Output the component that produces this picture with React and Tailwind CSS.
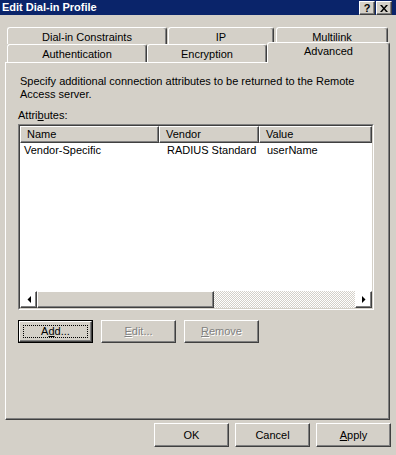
import React from 'react';

const raised = 'border border-t-white border-l-white border-r-[#404040] border-b-[#404040] shadow-[inset_-1px_-1px_#808080]';
const tabEdge = 'border-t border-l border-r border-t-white border-l-white border-r-[#404040] rounded-t-[3px] shadow-[inset_-1px_0_#808080]';

function Tab({ width, children, selected }) {
  if (selected) {
    return (
      <div
        className={`${tabEdge} relative z-10 mt-[-2px] h-[21px] bg-[#d4d0c8] flex justify-center pt-[2px] leading-[13px]`}
        style={{ width }}
      >
        {children}
      </div>
    );
  }
  return (
    <div className={`${tabEdge} h-full flex justify-center pt-[3px] leading-[13px]`} style={{ width }}>
      {children}
    </div>
  );
}

function Button({ children, disabled, isDefault, w = 75, h = 23 }) {
  if (isDefault) {
    return (
      <div className="border border-black" style={{ width: w, height: h }}>
        <div className={`${raised} relative h-full flex items-center justify-center`}>
          <span className="absolute inset-[3px] border border-dotted border-black" />
          <span className="leading-[13px]">{children}</span>
        </div>
      </div>
    );
  }
  return (
    <div className={`${raised} flex items-center justify-center`} style={{ width: w, height: h }}>
      <span className={disabled ? 'leading-[13px] text-[#808080] [text-shadow:1px_1px_#fff]' : 'leading-[13px]'}>{children}</span>
    </div>
  );
}

function Arrow({ dir }) {
  return (
    <div className={`${raised} w-[17px] h-[17px] flex items-center justify-center`}>
      <svg width="4" height="7" viewBox="0 0 4 7">
        {dir === 'left' ? <polygon points="4,0 4,7 0.5,3.5" fill="#000" /> : <polygon points="0,0 0,7 3.5,3.5" fill="#000" />}
      </svg>
    </div>
  );
}

function Header({ width, children, grow }) {
  return (
    <div className={`${raised} h-[17px] pl-[6px] flex items-center ${grow ? 'flex-1' : ''}`} style={grow ? undefined : { width }}>
      <span className="leading-[13px]">{children}</span>
    </div>
  );
}

export default function App() {
  return (
    <div className="w-[396px] h-[455px] bg-[#d4d0c8] flex flex-col text-[11px] text-black overflow-hidden font-['Liberation_Sans',Arial,sans-serif]">
      {/* title bar */}
      <div className="h-[15px] bg-[#0a246a] flex items-center justify-between pl-[2px] pr-[4px]">
        <span className="text-white font-bold text-[11px] leading-[13px]">Edit Dial-in Profile</span>
        <div className="flex gap-[1px] self-start mt-[1px]">
          <div className={`${raised} w-[16px] h-[14px] bg-[#d4d0c8] flex items-center justify-center`}>
            <span className="font-bold text-[11px] leading-[11px]">?</span>
          </div>
          <div className={`${raised} w-[16px] h-[14px] bg-[#d4d0c8] flex items-center justify-center`}>
            <svg width="8" height="7" viewBox="0 0 8 7">
              <path d="M0 0h2l2 2.5L6 0h2L5 3.5 8 7H6L4 4.5 2 7H0l3-3.5z" fill="#000" />
            </svg>
          </div>
        </div>
      </div>

      {/* tabs */}
      <div className="pt-[12px] pl-[7px]">
        <div className="flex h-[17px]">
          <Tab width={160}>Dial-in Constraints</Tab>
          <div className="w-[1px]" />
          <Tab width={106}>IP</Tab>
          <div className="w-[2px]" />
          <Tab width={112}>Multilink</Tab>
        </div>
        <div className="flex h-[18px]">
          <Tab width={140}>Authentication</Tab>
          <Tab width={120}>Encryption</Tab>
          <Tab width={123} selected>Advanced</Tab>
        </div>
      </div>

      {/* panel */}
      <div className="ml-[5px] w-[385px] h-[358px] border border-t-white border-l-white border-r-[#404040] border-b-[#404040] shadow-[inset_-1px_-1px_#808080] pt-[12px] pl-[12px]">
        <p className="pl-[2px] leading-[13px]">
          Specify additional connection attributes to be returned to the Remote
          <br />
          Access server.
        </p>
        <div className="mt-[8px] leading-[13px]">
          Attri<span className="underline">b</span>utes:
        </div>
        <div className="mt-[2px] w-[356px] h-[186px] border border-t-[#808080] border-l-[#808080] border-r-white border-b-white">
          <div className="h-full border border-t-[#404040] border-l-[#404040] border-r-[#d4d0c8] border-b-[#d4d0c8] bg-white flex flex-col">
            <div className="flex bg-[#d4d0c8]">
              <Header width={139}>Name</Header>
              <Header width={100}>Vendor</Header>
              <Header grow>Value</Header>
            </div>
            <div className="flex-1">
              <div className="flex h-[14px] items-center leading-[13px]">
                <div className="w-[139px] pl-[4px]">Vendor-Specific</div>
                <div className="w-[100px] pl-[8px]">RADIUS Standard</div>
                <div className="flex-1 pl-[8px]">userName</div>
              </div>
            </div>
            <div className="flex h-[17px]">
              <Arrow dir="left" />
              <div className={`${raised} w-[177px] h-[17px] bg-[#d4d0c8]`} />
              <div className="flex-1 bg-[repeating-conic-gradient(#fff_0_25%,#d4d0c8_0_50%)] bg-[length:2px_2px]" />
              <Arrow dir="right" />
            </div>
          </div>
        </div>
        <div className="mt-[10px] flex gap-[8px]">
          <Button isDefault>
            A<span className="underline">d</span>d...
          </Button>
          <Button disabled>
            <span className="underline">E</span>dit...
          </Button>
          <Button disabled>
            <span className="underline">R</span>emove
          </Button>
        </div>
      </div>

      {/* dialog buttons */}
      <div className="mt-[3px] flex justify-end gap-[6px] pr-[5px]">
        <Button h={24}>OK</Button>
        <Button h={24}>Cancel</Button>
        <Button h={24}>
          <span className="underline">A</span>pply
        </Button>
      </div>
    </div>
  );
}
